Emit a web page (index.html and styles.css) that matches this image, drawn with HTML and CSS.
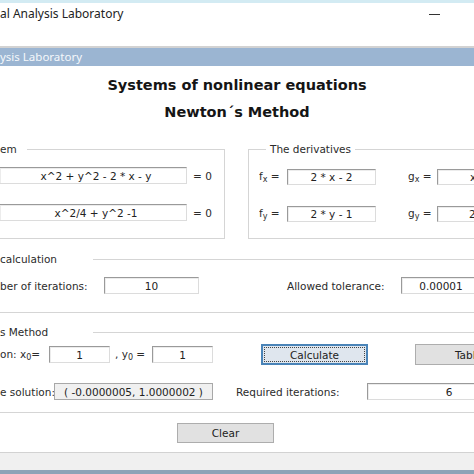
FILE: index.html
```html
<!DOCTYPE html>
<html lang="en">

<head>
    <meta charset="UTF-8">
    <meta name="viewport" content="width=device-width, initial-scale=1.0">
    <title>Numerical Analysis Laboratory</title>
    <link rel="stylesheet" href="styles.css">
</head>

<body>
    <!--Window frame------------------------------------------------------------>
    <div class="topline"></div>
    <div class="titlebar">
        <span class="title">al Analysis Laboratory</span>
        <span class="minimize"></span>
    </div>
    <div class="caption">ysis Laboratory</div>

    <div class="form">
        <h1>Systems of nonlinear equations</h1>
        <h2>Newton´s Method</h2>

        <!--System and derivatives------------------------------------------------>
        <div class="pair">
            <div class="group system">
                <div class="legend">em</div>
                <div class="eqrow first">
                    <input class="field eq" type="text" value="x^2 + y^2 - 2 * x - y" readonly />
                    <span class="zero">= 0</span>
                </div>
                <div class="eqrow">
                    <input class="field eq" type="text" value="x^2/4 + y^2 -1" readonly />
                    <span class="zero">= 0</span>
                </div>
            </div>
            <div class="group deriv">
                <div class="legend">The derivatives</div>
                <div class="drow first">
                    <span class="sym">f<sub>x</sub> =</span>
                    <input class="field dfield" type="text" value="2 * x - 2" readonly />
                    <span class="sym g">g<sub>x</sub> =</span>
                    <input class="field dfield" type="text" value="x / 2" readonly />
                </div>
                <div class="drow">
                    <span class="sym">f<sub>y</sub> =</span>
                    <input class="field dfield" type="text" value="2 * y - 1" readonly />
                    <span class="sym g">g<sub>y</sub> =</span>
                    <input class="field dfield" type="text" value="2 * y" readonly />
                </div>
            </div>
        </div>

        <!--Calculation data------------------------------------------------------>
        <div class="group wide calc">
            <div class="legend">calculation</div>
            <div class="crow">
                <span class="lbl-iter">ber of iterations:</span>
                <input class="field iter" type="text" value="10" />
                <span class="lbl-tol">Allowed tolerance:</span>
                <input class="field tol" type="text" value="0.00001" />
            </div>
        </div>

        <!--Method--------------------------------------------------------------->
        <div class="group wide method">
            <div class="legend">s Method</div>
            <div class="mrow first">
                <span class="lbl-x">on: x<sub>0</sub>=</span>
                <input class="field x0" type="text" value="1" />
                <span class="lbl-y">, y<sub>0</sub> =</span>
                <input class="field y0" type="text" value="1" />
                <button class="btn calc-btn" type="button">Calculate</button>
                <button class="btn tab-btn" type="button">Table</button>
            </div>
            <div class="mrow">
                <span class="lbl-sol">e solution:</span>
                <input class="field sol" type="text" value="( -0.0000005, 1.0000002 )" readonly />
                <span class="lbl-req">Required iterations:</span>
                <input class="field req" type="text" value="6" readonly />
            </div>
        </div>

        <div class="actions">
            <button class="btn clear-btn" type="button">Clear</button>
        </div>
    </div>

    <div class="statusbar"></div>
    <div class="bottomline"></div>
</body>

</html>
```

FILE: styles.css
```css
* {
    box-sizing: border-box;
}

body {
    margin: 0;
    width: 474px;
    height: 474px;
    overflow: hidden;
    background-color: white;
    color: #2b2b2b;
    font-family: "DejaVu Sans", sans-serif;
    font-size: 10.5px;
    white-space: nowrap;
}

/* window frame */
.topline {
    height: 3px;
    background-color: #d3ebf3;
}

.titlebar {
    height: 45px;
    display: flex;
    align-items: flex-start;
    padding-top: 3px;
    border-bottom: 2px solid #d2d2d2;
}

.title {
    font-family: "Noto Sans", sans-serif;
    font-size: 12px;
    line-height: 16px;
    color: #222;
}

.minimize {
    width: 11px;
    height: 1px;
    background-color: #333;
    margin: 8px 34px 0 auto;
}

.caption {
    height: 18px;
    background-color: #9bb5d2;
    color: #f5f8fb;
    font-family: "Noto Sans", sans-serif;
    font-size: 11.5px;
    line-height: 18px;
}

/* form */
.form {
    width: 474px;
}

h1,
h2 {
    width: 474px;
    margin: 9px 0 0;
    font-size: 14.5px;
    line-height: 20px;
    font-weight: bold;
    text-align: center;
    color: #151515;
}

h2 {
    margin-top: 7px;
}

sub {
    font-size: 8px;
    vertical-align: -2px;
}

.group {
    border: 1px solid #d5d5d5;
}

.legend {
    width: fit-content;
    background-color: white;
    line-height: 14px;
    margin-top: -8px;
}

.field {
    flex: none;
    height: 17px;
    padding: 0;
    border: 1px solid;
    border-color: #9a9a9a #dcdcdc #dcdcdc #9a9a9a;
    box-shadow: inset 1px 1px 0 #ececec;
    background-color: white;
    color: #222;
    font: inherit;
    text-align: center;
    outline: none;
}

.btn {
    flex: none;
    padding: 0;
    font: inherit;
    color: #222;
    background-color: #e1e1e1;
    border: 1px solid #adadad;
}

.pair span,
.crow span,
.mrow span {
    flex: none;
}

/* system */
.pair {
    display: flex;
    gap: 23px;
    margin-top: 27px;
}

.system {
    flex: none;
    width: 225px;
    border-left: none;
    padding-bottom: 17px;
}

.system .legend {
    padding-right: 10px;
}

.eqrow {
    display: flex;
    align-items: center;
    height: 17px;
    margin-top: 20px;
}

.eqrow.first {
    margin-top: 11px;
}

.eq {
    width: 187px;
    border-left: none;
    padding-left: 6px;
}

.zero {
    margin-left: 6px;
}

/* derivatives */
.deriv {
    flex: none;
    width: 226px;
    border-right: none;
    padding-left: 10px;
    padding-bottom: 16px;
}

.deriv .legend {
    margin-left: 7px;
    padding: 0 4px;
}

.drow {
    display: flex;
    align-items: center;
    height: 16px;
    margin-top: 21px;
    overflow: hidden;
}

.drow.first {
    margin-top: 13px;
}

.drow .field {
    height: 16px;
}

.sym {
    width: 28px;
}

.sym.g {
    width: 29px;
    margin-left: 32px;
}

.dfield {
    width: 89px;
}

/* calculation and method */
.wide {
    width: 474px;
    border-left: none;
    border-right: none;
}

.wide .legend {
    width: 93px;
}

.calc {
    margin-top: 20px;
    padding-bottom: 18px;
}

.crow {
    display: flex;
    align-items: center;
    height: 17px;
    margin-top: 11px;
    overflow: hidden;
}

.lbl-iter {
    width: 104px;
}

.iter {
    width: 95px;
}

.lbl-tol {
    width: 114px;
    margin-left: 88px;
}

.tol {
    width: 80px;
}

.method {
    margin-top: 19px;
    padding-bottom: 12px;
}

.mrow {
    display: flex;
    align-items: center;
    height: 17px;
    margin-top: 18px;
    overflow: hidden;
}

.mrow.first {
    height: 21px;
    margin-top: 5px;
}

.lbl-x {
    width: 49px;
}

.x0,
.y0 {
    width: 61px;
}

.lbl-y {
    width: 42px;
    padding-left: 5px;
}

.calc-btn {
    width: 107px;
    height: 21px;
    margin-left: 48px;
    background-color: #dfe6ee;
    border: 2px solid #4a84b8;
    outline: 1px dotted #444;
    outline-offset: -4px;
}

.tab-btn {
    width: 107px;
    height: 21px;
    margin-left: 47px;
}

.lbl-sol {
    width: 54px;
}

.sol {
    width: 159px;
    background-color: #f0f0f0;
    border-color: #a8a8a8;
    box-shadow: none;
}

.lbl-req {
    width: 131px;
    margin-left: 23px;
}

.req {
    width: 164px;
}

.actions {
    display: flex;
    padding: 10px 0 9px;
}

.clear-btn {
    width: 97px;
    height: 20px;
    margin-left: 177px;
}

/* status */
.statusbar {
    height: 18px;
    border-top: 1px solid #d2d2d2;
    background-color: #f0f0f0;
}

.bottomline {
    height: 4px;
    background-color: #8ea3b7;
}
```
